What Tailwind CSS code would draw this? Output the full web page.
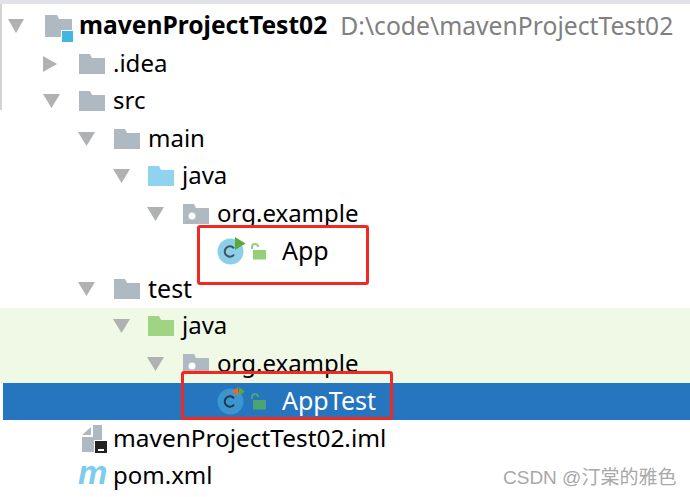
<!DOCTYPE html>
<html><head><meta charset="utf-8"><script src="https://cdn.jsdelivr.net/npm/@tailwindcss/browser@4"></script></head>
<body class="m-0">
<div class="relative w-[690px] h-[497px] overflow-hidden bg-white text-[24px] text-black font-['Noto_Sans','Noto_Sans_CJK_SC',sans-serif]">
  <div class="h-[4px] bg-[#e1e2e8]"></div>
  <div class="absolute left-0 top-[4px] w-[2px] h-[106px] bg-[#d4d4d8]"></div>
  <div class="pt-[3.5px] flex flex-col">
    <div class="h-[37.5px] flex items-center pl-[8px]">
      <svg class="w-[16px] h-[14px] mr-[21px]" viewBox="0 0 16 14"><path d="M0 0H16L8 14Z" fill="#afb1b3"/></svg>
      <svg class="w-[30px] h-[28px] mr-[4px] mt-[4px] shrink-0" viewBox="0 0 30 28"><path d="M0 1H12L14 5H27V23H0Z" fill="#afb9c1"/><rect x="16" y="16" width="13" height="12" fill="#fff"/><rect x="17" y="17" width="11" height="11" fill="#40b6e0"/></svg>
      <span class="font-bold whitespace-nowrap text-[24.6px] mb-[2px]">mavenProjectTest02</span>
      <span class="ml-[13px] text-[#808080] whitespace-nowrap text-[24.7px] mb-[2px]">D:\code\mavenProjectTest02</span>
    </div>
    <div class="h-[37.5px] flex items-center pl-[43px]">
      <svg class="w-[14px] h-[16px] mr-[22px]" viewBox="0 0 14 16"><path d="M0 0V16L14 8Z" fill="#afb1b3"/></svg>
      <svg class="w-[26px] h-[20px] mr-[8px]" viewBox="0 0 26 20"><path d="M0 0H11L13 4H26V20H0Z" fill="#afb9c1"/></svg>
      <span class="mb-[2px]">.idea</span>
    </div>
    <div class="h-[37.5px] flex items-center pl-[43px]">
      <svg class="w-[17px] h-[14px] mr-[19px]" viewBox="0 0 17 14"><path d="M0 0H17L8.500 14Z" fill="#afb1b3"/></svg>
      <svg class="w-[26px] h-[20px] mr-[8px]" viewBox="0 0 26 20"><path d="M0 0H11L13 4H26V20H0Z" fill="#afb9c1"/></svg>
      <span class="mb-[2px]">src</span>
    </div>
    <div class="h-[37.5px] flex items-center pl-[78px]">
      <svg class="w-[17px] h-[14px] mr-[19px]" viewBox="0 0 17 14"><path d="M0 0H17L8.500 14Z" fill="#afb1b3"/></svg>
      <svg class="w-[26px] h-[20px] mr-[8px]" viewBox="0 0 26 20"><path d="M0 0H11L13 4H26V20H0Z" fill="#afb9c1"/></svg>
      <span class="mb-[2px]">main</span>
    </div>
    <div class="h-[37.5px] flex items-center pl-[113px]">
      <svg class="w-[17px] h-[14px] mr-[18px]" viewBox="0 0 17 14"><path d="M0 0H17L8.500 14Z" fill="#afb1b3"/></svg>
      <svg class="w-[26px] h-[20px] mr-[8px]" viewBox="0 0 26 20"><path d="M0 0H11L13 4H26V20H0Z" fill="#8fd3ef"/></svg>
      <span class="mb-[2px]">java</span>
    </div>
    <div class="h-[37.5px] flex items-center pl-[147px]">
      <svg class="w-[17px] h-[14px] mr-[19px]" viewBox="0 0 17 14"><path d="M0 0H17L8.500 14Z" fill="#afb1b3"/></svg>
      <svg class="w-[26px] h-[20px] mr-[8px]" viewBox="0 0 26 20"><path d="M0 0H11L13 4H26V20H0Z" fill="#afb9c1"/><circle cx="9" cy="12" r="3.500" fill="#fff"/></svg>
      <span class="mb-[2px]">org.example</span>
    </div>
    <div class="h-[37.5px] flex items-center pl-[217px]">
      <svg class="w-[50px] h-[30px] mr-[15px]" viewBox="0 0 50 30"><circle cx="13.500" cy="15.500" r="13" fill="#8ccfe9"/><path d="M17 12.300A5.200 5.200 0 1 0 17 18.700" fill="none" stroke="#43515c" stroke-width="2"/><path d="M18 1L28.500 7.500L18 14Z" fill="#59a83a"/><path d="M35 13V11A3 3 0 0 1 41 11" fill="none" stroke="#94d07a" stroke-width="2"/><rect x="36" y="14" width="13" height="9.500" fill="#94d07a"/></svg>
      <span class="text-[25px] mb-[2px]">App</span>
    </div>
    <div class="h-[37.5px] flex items-center pl-[78px]">
      <svg class="w-[17px] h-[14px] mr-[19px]" viewBox="0 0 17 14"><path d="M0 0H17L8.500 14Z" fill="#afb1b3"/></svg>
      <svg class="w-[26px] h-[20px] mr-[8px]" viewBox="0 0 26 20"><path d="M0 0H11L13 4H26V20H0Z" fill="#afb9c1"/></svg>
      <span class="text-[25px] mb-[1px]">test</span>
    </div>
    <div class="h-[37.5px] flex items-center pl-[113px] bg-[#eff9e5]">
      <svg class="w-[17px] h-[14px] mr-[18px]" viewBox="0 0 17 14"><path d="M0 0H17L8.500 14Z" fill="#afb1b3"/></svg>
      <svg class="w-[26px] h-[20px] mr-[8px]" viewBox="0 0 26 20"><path d="M0 0H11L13 4H26V20H0Z" fill="#9fd484"/></svg>
      <span class="mb-[2px]">java</span>
    </div>
    <div class="h-[37.5px] flex items-center pl-[147px] bg-[#eff9e5]">
      <svg class="w-[17px] h-[14px] mr-[19px]" viewBox="0 0 17 14"><path d="M0 0H17L8.500 14Z" fill="#afb1b3"/></svg>
      <svg class="w-[26px] h-[20px] mr-[8px]" viewBox="0 0 26 20"><path d="M0 0H11L13 4H26V20H0Z" fill="#afb9c1"/><circle cx="9" cy="12" r="3.500" fill="#fff"/></svg>
      <span class="mb-[2px]">org.example</span>
    </div>
    <div class="h-[37.5px] flex items-center pl-[214px] ml-[3px] bg-[#2675bf] text-white">
      <svg class="w-[50px] h-[30px] mr-[15px]" viewBox="0 0 50 30"><circle cx="13.500" cy="15.500" r="13" fill="#3b95cf"/><path d="M17 12.300A5.200 5.200 0 1 0 17 18.700" fill="none" stroke="#1f3a4f" stroke-width="2"/><path d="M21 1L15 5.500L21 10Z" fill="#e8682f"/><path d="M22 1L28 5.500L22 10Z" fill="#59a83a"/><path d="M35 13V11A3 3 0 0 1 41 11" fill="none" stroke="#4da372" stroke-width="2"/><rect x="36" y="14" width="13" height="9.500" fill="#4da372"/></svg>
      <span class="text-[25px] mb-[2px]">AppTest</span>
    </div>
    <div class="h-[37.5px] flex items-center pl-[82px]">
      <svg class="w-[26px] h-[29px] mr-[5px]" viewBox="0 0 26 29"><path d="M0 11L9 3V11ZM11 1H20V16H12V28H0V13H11Z" fill="#afb9c1"/><rect x="13" y="17" width="12" height="12" fill="#222"/><rect x="16" y="25" width="6" height="2" fill="#fff"/></svg>
      <span class="text-[24.4px]">mavenProjectTest02.iml</span>
    </div>
    <div class="h-[37.5px] flex items-center pl-[78px]">
      <span class="w-[35px] text-[33px] leading-none font-bold italic text-[#7ccdec] font-['Liberation_Sans',sans-serif] -mt-[8px]">m</span>
      <span class="mb-[2px]">pom.xml</span>
    </div>
  </div>
  <div class="absolute left-[197px] top-[225px] w-[172px] h-[60px] border-[3px] border-[#f02a20] rounded-[3px]"></div>
  <div class="absolute left-[181px] top-[371px] w-[212px] h-[49px] border-[3px] border-[#f02a20] rounded-[3px]"></div>
  <div class="absolute left-[503px] top-[466px] text-[19px] leading-[24px] text-[#a8a8a8] whitespace-nowrap font-['Liberation_Sans','Noto_Sans_CJK_SC',sans-serif]">CSDN @汀棠的雅色</div>
</div>
</body></html>
